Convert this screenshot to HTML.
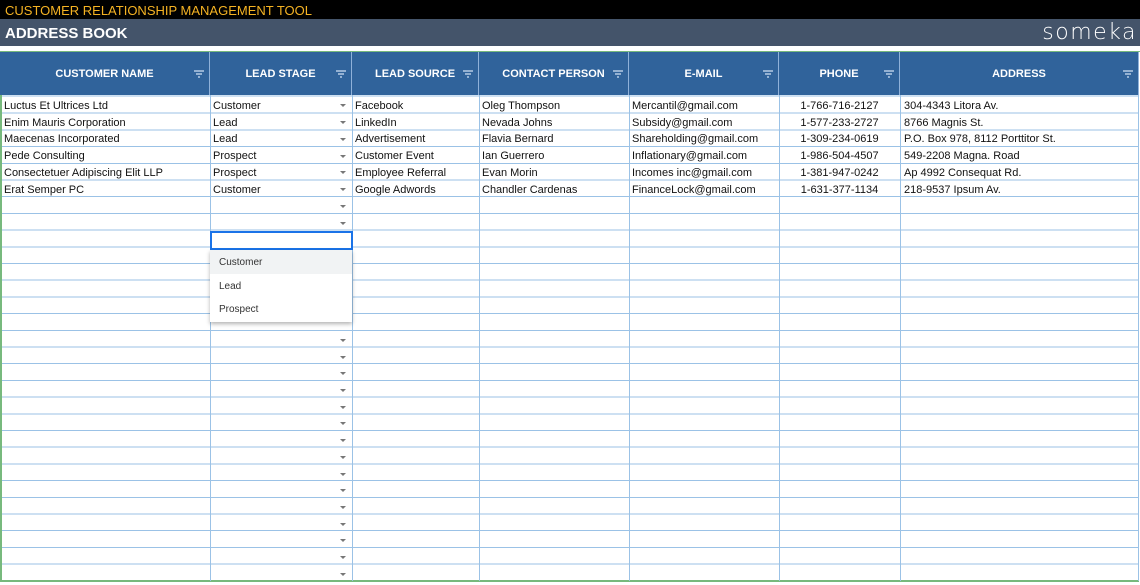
<!DOCTYPE html>
<html><head><meta charset="utf-8"><style>
*{margin:0;padding:0;box-sizing:border-box}
body{width:1140px;height:585px;position:relative;background:#fff;font-family:"Liberation Sans","DejaVu Sans",sans-serif;overflow:hidden}
.t1{position:absolute;left:0;top:0;width:1140px;height:19px;background:#000;color:#f5b323;font-size:13px;line-height:21px;padding-left:5px}
.t2{position:absolute;left:0;top:19px;width:1140px;height:27px;background:#44546a;color:#fff;font-size:15px;font-weight:bold;line-height:29px;padding-left:5px}
.logo{position:absolute;right:3px;top:19px;color:#fff;font-size:22px;line-height:28px;letter-spacing:1.5px;font-family:"DejaVu Sans",sans-serif;font-weight:300}
.hdr{position:absolute;top:52px;height:43px;background:#30639b;color:#fff;font-size:11px;font-weight:bold;text-align:center;line-height:45px;border-right:1px solid #8fb1d9}
.fi{position:absolute;right:5px;top:18px;width:10px;height:8px}
.grid{position:absolute;left:0;top:95px;width:1139px;height:487px;border-left:2px solid #77b97d;border-bottom:2px solid #77b97d;
background:repeating-linear-gradient(to bottom,transparent 0,transparent 15.7px,#9bc2e6 15.7px,#9bc2e6 16.7px);background-position:0 2px}
.v{position:absolute;top:95px;height:486px;width:1px;background:#9bc2e6}
.c{position:absolute;font-size:11px;color:#111;line-height:16.7px;white-space:nowrap}
.ar{position:absolute;left:340px;width:0;height:0;border-left:3px solid transparent;border-right:3px solid transparent;border-top:3px solid #777}
.sel{position:absolute;left:210px;top:231px;width:143px;height:19px;border:2px solid #1a73e8;background:#fff}
.dd{position:absolute;left:210px;top:250px;width:142px;height:72px;background:#fff;box-shadow:0 2px 4px rgba(0,0,0,.3);font-size:10px;color:#333}
.dd div{height:23.5px;line-height:25px;padding-left:9px}
</style></head><body>
<div class="t1">CUSTOMER RELATIONSHIP MANAGEMENT TOOL</div>
<div class="t2">ADDRESS BOOK</div>
<div class="logo">someka</div>
<div style="position:absolute;left:0;top:51px;width:1140px;height:1px;background:#77b97d"></div>
<div class="hdr" style="left:0;width:210px">CUSTOMER NAME<svg class="fi" viewBox="0 0 10 8"><path d="M0 1h10M2 4h6M4 7h2" stroke="#cfe0f3" stroke-width="1.3"/></svg></div>
<div class="hdr" style="left:210px;width:142px">LEAD STAGE<svg class="fi" viewBox="0 0 10 8"><path d="M0 1h10M2 4h6M4 7h2" stroke="#cfe0f3" stroke-width="1.3"/></svg></div>
<div class="hdr" style="left:352px;width:127px">LEAD SOURCE<svg class="fi" viewBox="0 0 10 8"><path d="M0 1h10M2 4h6M4 7h2" stroke="#cfe0f3" stroke-width="1.3"/></svg></div>
<div class="hdr" style="left:479px;width:150px">CONTACT PERSON<svg class="fi" viewBox="0 0 10 8"><path d="M0 1h10M2 4h6M4 7h2" stroke="#cfe0f3" stroke-width="1.3"/></svg></div>
<div class="hdr" style="left:629px;width:150px">E-MAIL<svg class="fi" viewBox="0 0 10 8"><path d="M0 1h10M2 4h6M4 7h2" stroke="#cfe0f3" stroke-width="1.3"/></svg></div>
<div class="hdr" style="left:779px;width:121px">PHONE<svg class="fi" viewBox="0 0 10 8"><path d="M0 1h10M2 4h6M4 7h2" stroke="#cfe0f3" stroke-width="1.3"/></svg></div>
<div class="hdr" style="left:900px;width:239px">ADDRESS<svg class="fi" viewBox="0 0 10 8"><path d="M0 1h10M2 4h6M4 7h2" stroke="#cfe0f3" stroke-width="1.3"/></svg></div>
<div class="grid"></div>
<div class="v" style="left:210px"></div><div class="v" style="left:352px"></div><div class="v" style="left:479px"></div><div class="v" style="left:629px"></div><div class="v" style="left:779px"></div><div class="v" style="left:900px"></div><div class="v" style="left:1138px"></div>

<div class="c" style="left:4px;top:98px">Luctus Et Ultrices Ltd<br>Enim Mauris Corporation<br>Maecenas Incorporated<br>Pede Consulting<br>Consectetuer Adipiscing Elit LLP<br>Erat Semper PC</div>
<div class="c" style="left:213px;top:98px">Customer<br>Lead<br>Lead<br>Prospect<br>Prospect<br>Customer</div>
<div class="c" style="left:355px;top:98px">Facebook<br>LinkedIn<br>Advertisement<br>Customer Event<br>Employee Referral<br>Google Adwords</div>
<div class="c" style="left:482px;top:98px">Oleg Thompson<br>Nevada Johns<br>Flavia Bernard<br>Ian Guerrero<br>Evan Morin<br>Chandler Cardenas</div>
<div class="c" style="left:632px;top:98px">Mercantil@gmail.com<br>Subsidy@gmail.com<br>Shareholding@gmail.com<br>Inflationary@gmail.com<br>Incomes inc@gmail.com<br>FinanceLock@gmail.com</div>
<div class="c" style="left:779px;width:121px;text-align:center;top:98px">1-766-716-2127<br>1-577-233-2727<br>1-309-234-0619<br>1-986-504-4507<br>1-381-947-0242<br>1-631-377-1134</div>
<div class="c" style="left:904px;top:98px">304-4343 Litora Av.<br>8766 Magnis St.<br>P.O. Box 978, 8112 Porttitor St.<br>549-2208 Magna. Road<br>Ap 4992 Consequat Rd.<br>218-9537 Ipsum Av.</div>

<div class="ar" style="top:104px"></div><div class="ar" style="top:121px"></div><div class="ar" style="top:138px"></div><div class="ar" style="top:155px"></div><div class="ar" style="top:171px"></div><div class="ar" style="top:188px"></div><div class="ar" style="top:205px"></div><div class="ar" style="top:222px"></div>
<div class="ar" style="top:339px"></div><div class="ar" style="top:356px"></div><div class="ar" style="top:372px"></div><div class="ar" style="top:389px"></div><div class="ar" style="top:406px"></div><div class="ar" style="top:422px"></div><div class="ar" style="top:439px"></div><div class="ar" style="top:456px"></div><div class="ar" style="top:473px"></div><div class="ar" style="top:489px"></div><div class="ar" style="top:506px"></div><div class="ar" style="top:523px"></div><div class="ar" style="top:539px"></div><div class="ar" style="top:556px"></div><div class="ar" style="top:573px"></div>
<div class="sel"></div>
<div class="dd"><div style="background:#f1f3f4">Customer</div><div>Lead</div><div>Prospect</div></div>
</body></html>
